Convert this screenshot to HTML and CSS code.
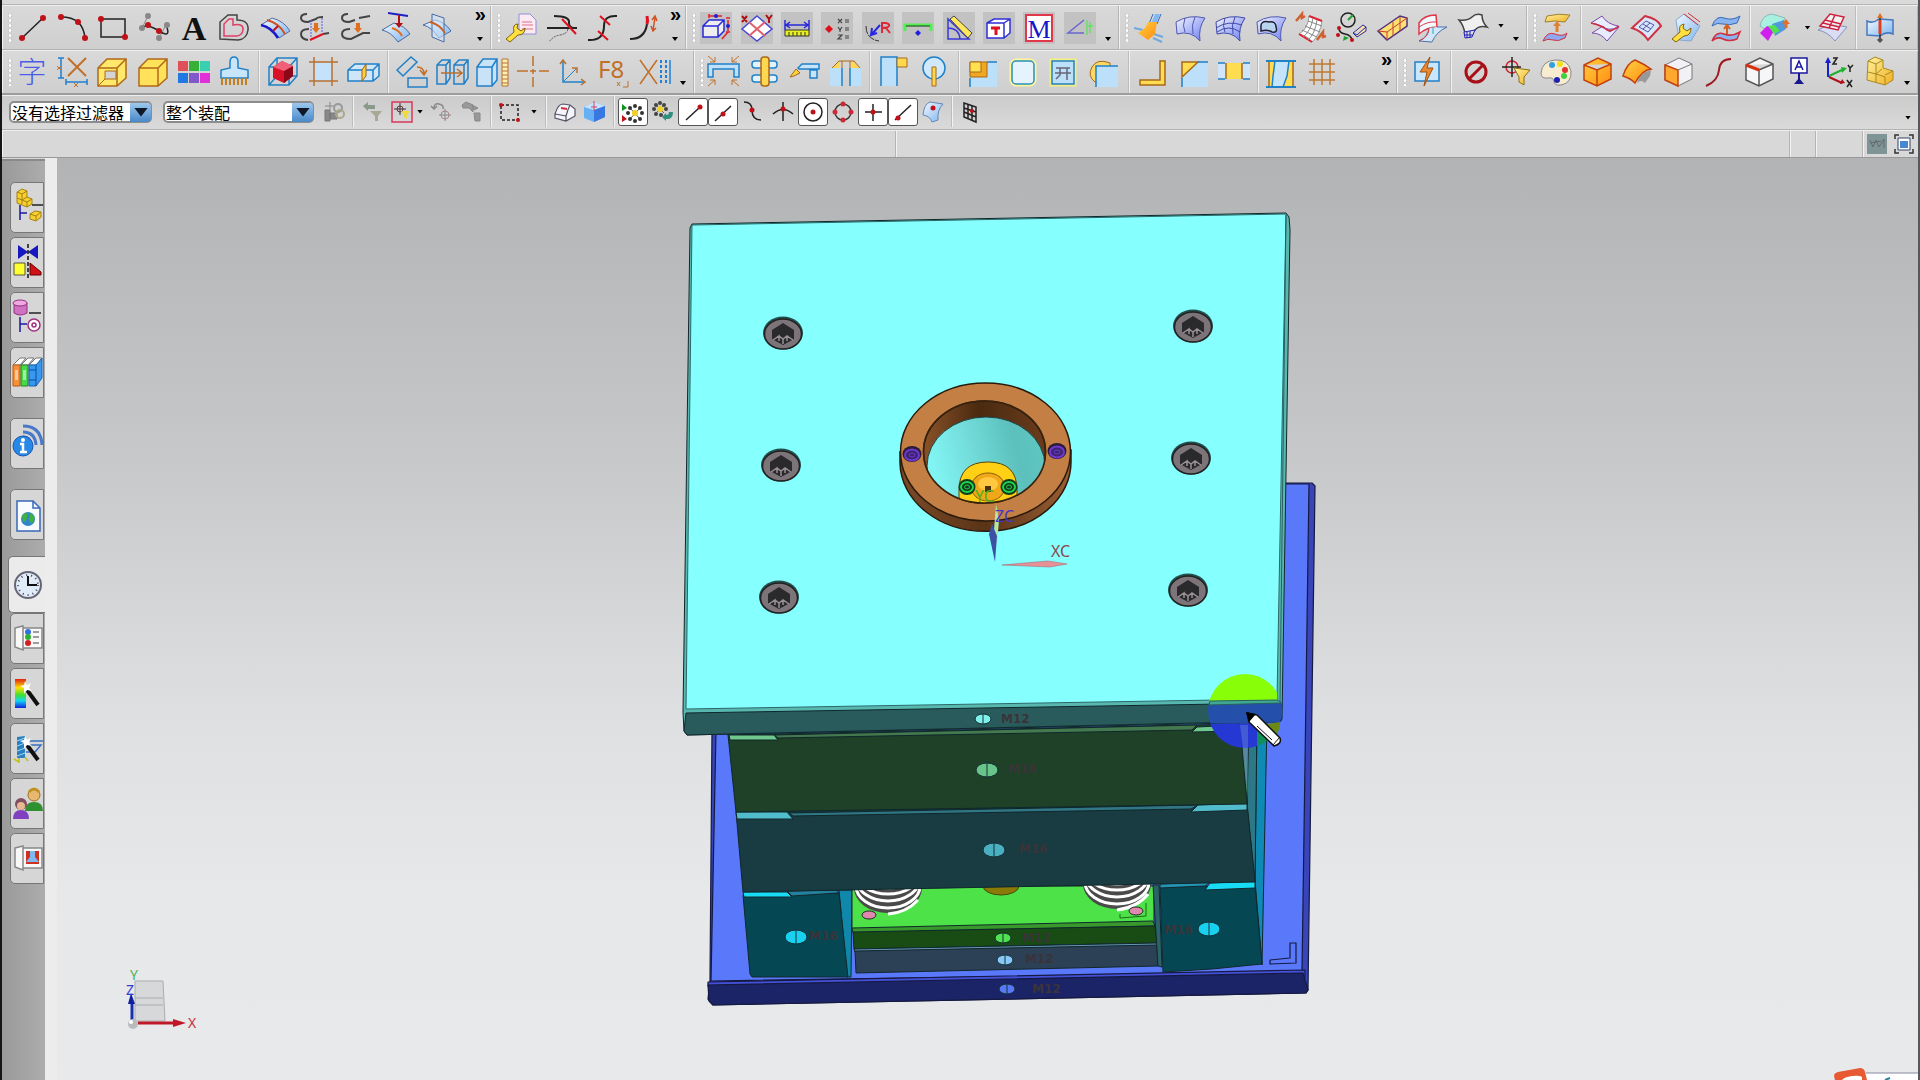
FILE: index.html
```html
<!DOCTYPE html>
<html lang="zh-CN">
<head>
<meta charset="utf-8">
<title>模具装配</title>
<link rel="stylesheet" href="styles.css">
</head>
<body>
<svg class="defs" aria-hidden="true">
<defs>
<linearGradient id="gBlue" x1="0" y1="0" x2="1" y2="1"><stop offset="0" stop-color="#f4f6ff"/><stop offset="1" stop-color="#6a7cf0"/></linearGradient>
<linearGradient id="gSky" x1="0" y1="0" x2="1" y2="1"><stop offset="0" stop-color="#f2f9ff"/><stop offset="1" stop-color="#7fb4ee"/></linearGradient>
<linearGradient id="gGold" x1="0" y1="0" x2="1" y2="1"><stop offset="0" stop-color="#fff3a0"/><stop offset="1" stop-color="#f0b020"/></linearGradient>
<linearGradient id="gOrange" x1="0" y1="0" x2="1" y2="1"><stop offset="0" stop-color="#ffd040"/><stop offset="1" stop-color="#ff8c10"/></linearGradient>
<linearGradient id="gRain" x1="0" y1="0" x2="0" y2="1"><stop offset="0" stop-color="#e02010"/><stop offset=".3" stop-color="#ffe000"/><stop offset=".55" stop-color="#40e030"/><stop offset=".75" stop-color="#10d8f0"/><stop offset="1" stop-color="#1020e0"/></linearGradient>
</defs>
</svg>
<div class="app">
<header class="toolbars">
<div class="strip"></div>

<div class="bar row-one">
<section class="group" aria-label="曲线"><span class="grip"></span>
<button class="tool" type="button" aria-label="直线"><svg viewBox="0 0 32 32"><path d="M6 26L27 6" stroke="#222" stroke-width="1.5"/><g fill="#c01018"><circle cx="6" cy="26" r="3"/><circle cx="27" cy="6" r="3"/></g></svg></button>
<button class="tool" type="button" aria-label="圆弧"><svg viewBox="0 0 32 32"><path d="M4 5Q26 5 28 26" stroke="#222" stroke-width="1.5"/><g fill="#c01018"><circle cx="4" cy="5" r="3"/><circle cx="21" cy="10" r="3"/><circle cx="28" cy="26" r="3"/></g></svg></button>
<button class="tool" type="button" aria-label="矩形"><svg viewBox="0 0 32 32"><path d="M4 7H28V25H4z" stroke="#222" stroke-width="1.5"/><g fill="#c01018"><circle cx="4" cy="7" r="3"/><circle cx="28" cy="25" r="3"/></g></svg></button>
<button class="tool" type="button" aria-label="艺术样条"><svg viewBox="0 0 32 32"><path d="M4 16L10 4 M21 26L28 13" stroke="#888"/><path d="M4 16Q8 11 21 19T28 13" stroke="#222" stroke-width="1.5"/><g fill="#888"><circle cx="10" cy="4" r="3"/><circle cx="4" cy="16" r="3"/><circle cx="29" cy="13" r="3"/><circle cx="21" cy="26" r="3"/></g><g fill="#c01018"><circle cx="10" cy="13" r="3"/><circle cx="21" cy="19" r="3"/></g></svg></button>
<button class="tool" type="button" aria-label="文本"><svg viewBox="0 0 32 32"><text class="serif-a" x="16" y="28">A</text></svg></button>
<button class="tool" type="button" aria-label="偏置曲线"><svg viewBox="0 0 32 32"><path d="M2 27V10L10 3H19V8Q31 8 30 18Q29 27 20 28Z" stroke="#444" stroke-width="1.5"/><path d="M6 24V12L11 7H15V13Q26 11 25 18Q24 24 18 24Z" stroke="#e04068" stroke-width="1.5"/></svg></button>
<button class="tool" type="button" aria-label="面上偏置"><svg viewBox="0 0 32 32"><path d="M2 13L13 6Q25 9 31 19L20 26Q14 15 2 13Z" fill="url(#gSky)" stroke="#5a6a98"/><path d="M2 13Q12 15 19 26" stroke="#1818d0" stroke-width="2.5"/><path d="M8 8Q20 11 26 22" stroke="#d05020" stroke-width="2"/><path d="M14 19L19 14" stroke="#c01018" stroke-width="2"/></svg></button>
<button class="tool" type="button" aria-label="桥接曲线"><svg viewBox="0 0 32 32"><path d="M8 2Q2 2 2 6T9 10L17 7Q18 5 24 5 M10 17Q2 17 2 22T9 28 M24 22L30 21" stroke="#444" stroke-width="2"/><path d="M12 8V26 M23 6V20" stroke="#5858f0" stroke-dasharray="2 1"/><path d="M11 28L24 22" stroke="#e01020" stroke-width="2"/><path d="M15 11H19V16H21L17 21L13 16H15Z" fill="#e07020"/></svg></button>
<button class="tool" type="button" aria-label="连结曲线"><svg viewBox="0 0 32 32"><path d="M8 2Q2 2 2 6T9 10L15 8 M19 6L30 4 M10 17Q2 17 2 22T11 27L23 21L30 21" stroke="#444" stroke-width="2"/><path d="M16 11H20V16H22L18 21L14 16H16Z" fill="#e07020"/></svg></button>
<button class="tool" type="button" aria-label="投影曲线"><svg viewBox="0 0 32 32"><path d="M2 18L14 11Q25 14 30 22L18 30Q11 20 2 18Z" fill="url(#gSky)" stroke="#4a6aa0"/><path d="M8 1L28 4" stroke="#2020c8" stroke-width="2"/><path d="M19 3V14" stroke="#b01018" stroke-width="2"/><path d="M15 11H23L19 16Z" fill="#b01018"/><path d="M12 16Q19 18 22 24" stroke="#e07020" stroke-width="2"/></svg></button>
<button class="tool" type="button" aria-label="相交曲线"><svg viewBox="0 0 32 32"><path d="M2 13L14 8Q24 10 30 19L18 26Q11 15 2 13Z" fill="url(#gSky)" stroke="#4a6aa0"/><path d="M11 2L23 6V30L11 25Z" fill="#cfe4fa" fill-opacity=".6" stroke="#4a6aa0"/><path d="M9 10Q18 12 24 21" stroke="#d06020" stroke-width="2"/></svg></button>
<div class="tail wide"><span class="chev">»</span><span class="drop"></span></div></section>

<section class="group" aria-label="编辑曲线"><span class="grip"></span>
<button class="tool" type="button" aria-label="编辑参数"><svg viewBox="0 0 32 32"><path d="M14 2H25L31 8V22H14Z" fill="#fbeaf4" stroke="#9090d8"/><path d="M17 10H27 M17 13H28 M17 17H28" stroke="#e07080"/><path d="M1 27L9 20Q7 12 13 12L12 16L16 19L20 16Q20 23 13 23L5 30Z" fill="#ffe040" stroke="#806010"/></svg></button>
<button class="tool" type="button" aria-label="修剪曲线"><svg viewBox="0 0 32 32"><path d="M8 4Q24 4 23 11Q23 15 27 16" stroke="#222" stroke-width="2"/><path d="M1 16H31" stroke="#222" stroke-width="2"/><path d="M22 17Q21 22 14 23T3 30" stroke="#555" stroke-dasharray="2 1"/><path d="M16 7L30 22" stroke="#e01020" stroke-width="2"/></svg></button>
<button class="tool" type="button" aria-label="分割曲线"><svg viewBox="0 0 32 32"><path d="M31 4Q18 3 18 14Q18 29 2 28" stroke="#222" stroke-width="2"/><path d="M14 4L24 13 M12 19L22 28" stroke="#e01020" stroke-width="2"/></svg></button>
<button class="tool" type="button" aria-label="曲线长度"><svg viewBox="0 0 32 32"><path d="M3 27Q18 27 20 12" stroke="#222" stroke-width="2"/><path d="M20 12Q21 9 20 4" stroke="#e01020" stroke-width="3"/><path d="M28 6L26 18 M25 8L28 4L30 9 M24 14L26 19L29 16" stroke="#d05020" stroke-width="1.5"/></svg></button>
<div class="tail"><span class="chev">»</span><span class="drop"></span></div></section>

<section class="group" aria-label="尺寸"><span class="grip"></span>
<button class="tool on" type="button" aria-label="简单距离"><svg viewBox="0 0 32 32"><path d="M3 14L9 8H24V19L18 25H3Z M3 14H18V25 M18 14L24 8" fill="#eee" stroke="#2828d8" stroke-width="1.5"/><path d="M9 4H22 M28 8V19 M22 27L28 20 M9 2V6 M26 6H30 M26 20H30" stroke="#e02030" stroke-width="1.5"/><circle cx="16" cy="4" r="2" fill="#2020d0"/><circle cx="28" cy="14" r="2" fill="#2020d0"/></svg></button>
<button class="tool on" type="button" aria-label="坐标平面"><svg viewBox="0 0 32 32"><path d="M16 4L31 17L16 29L1 17Z" fill="#fff" stroke="#4848d8" stroke-width="1.5"/><path d="M8 10L24 24 M24 10L8 24" stroke="#e06070" stroke-width="2"/><path d="M1 4L6 10 M6 4L1 10 M25 3L28 7L31 3 M28 7V11" stroke="#b01018" stroke-width="2"/></svg></button>
<button class="tool on" type="button" aria-label="测量距离"><svg viewBox="0 0 32 32"><path d="M4 8V18 M28 8V18 M5 13H27 M9 10L5 13L9 16 M23 10L27 13L23 16" stroke="#2828d8" stroke-width="1.5"/><path d="M4 18H28V24H4Z" fill="#e8f020" stroke="#333"/><path d="M8 20V24 M12 20V24 M16 20V24 M20 20V24 M24 20V24" stroke="#333"/></svg></button>
<button class="tool on" type="button" aria-label="点坐标"><svg viewBox="0 0 32 32"><path d="M8 13L12 17L8 21L4 17Z" fill="#e01018"/><path d="M17 7L21 11 M21 7L17 11 M17 15L19 18L21 15 M19 18V20 M17 23H21L17 27H21 M24 8H28 M24 10H28 M24 16H28 M24 18H28 M24 24H28 M24 26H28" stroke="#444" stroke-width="1.2"/></svg></button>
<button class="tool on" type="button" aria-label="半径"><svg viewBox="0 0 32 32"><path d="M4 14Q4 27 17 29" stroke="#333" stroke-dasharray="8 1"/><path d="M18 13L10 22 M10 16L9 23L15 21" stroke="#2828e0" stroke-width="2"/><path d="M20 21V11H24Q28 12 27 14T20 16 M24 16L28 21" stroke="#e02838" stroke-width="2"/></svg></button>
<button class="tool on" type="button" aria-label="水平"><svg viewBox="0 0 32 32"><path d="M3 19V13H29V19" stroke="#50f050" stroke-width="3"/><path d="M4 14H28" stroke="#333"/><path d="M16 18L19 21L16 24L13 21Z" fill="#2020e0"/></svg></button>
<button class="tool on" type="button" aria-label="角度"><svg viewBox="0 0 32 32"><path d="M5 7V27H26Z M5 16Q16 16 17 27" stroke="#3838d8" stroke-width="1.5"/><path d="M7 7L11 4L29 21L25 26Z" fill="#ffe860" stroke="#444"/></svg></button>
<button class="tool on" type="button" aria-label="注释体"><svg viewBox="0 0 32 32"><path d="M4 11L11 7H27V21L21 26H4Z M4 11H21V26 M21 11L27 7" fill="#fff" stroke="#3030d8" stroke-width="1.5"/><path d="M8 16H17 M13 16V23" stroke="#e01020" stroke-width="3"/></svg></button>
<button class="tool on" type="button" aria-label="测量"><svg viewBox="0 0 32 32"><path d="M3 3H29V29H3Z" fill="#fff" stroke="#e03848" stroke-width="2"/><text class="serif-m" x="16" y="26">M</text></svg></button>
<button class="tool on" type="button" aria-label="夹角"><svg viewBox="0 0 32 32"><path d="M20 8L4 21H20" stroke="#6868d0" stroke-width="1.5"/><path d="M23 8V23 M26 10V21 M23 14H29" stroke="#68e068" stroke-width="1.5"/></svg></button>
<div class="tail thin"><span class="drop low"></span></div></section>

<section class="group" aria-label="曲面"><span class="grip"></span>
<button class="tool" type="button" aria-label="面倒圆"><svg viewBox="0 0 32 32"><path d="M16 12L20 2 M24 12L28 2" stroke="#3868b8"/><path d="M18 12L22 2H27L23 13Z" fill="#80b8f4"/><path d="M1 16L10 18M21 22L30 25 M20 26L29 30" stroke="#70a8e0" stroke-width="2"/><path d="M5 21L12 16L15 10H24L22 22L15 28Z" fill="url(#gOrange)"/></svg></button>
<button class="tool" type="button" aria-label="直纹面"><svg viewBox="0 0 32 32"><path d="M2 10Q15 2 31 6Q24 16 26 29Q17 18 3 22Z" fill="url(#gBlue)" stroke="#5058b0"/><path d="M11 6Q8 14 11 20 M21 5Q17 13 19 22" stroke="#5058b0"/></svg></button>
<button class="tool" type="button" aria-label="网格曲面"><svg viewBox="0 0 32 32"><path d="M2 10Q15 2 31 6Q24 16 26 29Q17 18 3 22Z" fill="url(#gBlue)" stroke="#4048a8"/><path d="M11 6Q8 14 11 20 M21 5Q17 13 19 22 M2 16Q14 8 28 13 M3 20Q15 12 26 20" stroke="#4048a8"/></svg></button>
<button class="tool" type="button" aria-label="修补开口"><svg viewBox="0 0 32 32"><path d="M2 10Q15 2 31 6Q24 16 26 29Q17 18 3 22Z" fill="url(#gBlue)" stroke="#5058b0"/><path d="M6 16Q5 8 14 10Q21 9 21 15Q23 21 17 20Q13 17 6 19Z" fill="#b8d4ee" stroke="#223" stroke-width="1.5"/></svg></button>
<button class="tool" type="button" aria-label="扫掠"><svg viewBox="0 0 32 32"><path d="M4 22Q13 17 14 4L27 9Q25 23 17 30Q13 24 4 22Z" fill="#fff" stroke="#999"/><path d="M14 4L27 9 M4 22L17 30" stroke="#e02030" stroke-width="2"/><path d="M18 6Q16 19 8 25 M22 8Q20 22 13 28 M10 14L25 20 M7 18L22 25 M13 9L27 14" stroke="#888"/><path d="M1 9L7 2V6L10 4M22 28L28 20V25L31 24" stroke="#d06030" stroke-width="2.5"/></svg></button>
<button class="tool" type="button" aria-label="截面"><svg viewBox="0 0 32 32"><circle cx="13" cy="8" r="7" stroke="#222" stroke-width="1.5"/><path d="M13 8L18 3" stroke="#20a030" stroke-width="2"/><path d="M4 16Q4 21 10 22T17 28" stroke="#222" stroke-width="1.5"/><g fill="#c01018"><circle cx="4" cy="16" r="2"/><circle cx="3" cy="23" r="2"/><circle cx="17" cy="28" r="2"/></g><path d="M8 29L14 26L9 24Z" fill="#20a030"/><path d="M18 21L28 13L31 15V19L22 25Z M18 21L22 23L31 15" fill="#ffe0a0" stroke="#2828a0"/></svg></button>
<button class="tool" type="button" aria-label="变化扫掠"><svg viewBox="0 0 32 32"><path d="M2 19L24 4L31 6V14L11 28Z" fill="#ffe070" stroke="#503080" stroke-width="1.5"/><path d="M2 19L11 20L31 6 M11 20V28 M17 10V24 M24 5V19" stroke="#c04030"/></svg></button>
<button class="tool" type="button" aria-label="过渡曲面"><svg viewBox="0 0 32 32"><path d="M3 11Q8 3 20 3L21 15Q11 15 3 22Z" fill="#f2fbff" stroke="#e03848" stroke-width="1.5"/><path d="M21 15H31Q20 20 16 30L3 29Q12 25 13 16" fill="#d2e8fa" stroke="#5070a8"/><path d="M3 29Q13 25 13 16 M3 15Q12 9 20 10" stroke="#e03848"/><path d="M17 15V22" stroke="#20b0b0"/></svg></button>
<button class="tool" type="button" aria-label="曲面编辑"><svg viewBox="0 0 32 32"><path d="M2 8Q11 9 15 5T25 3Q25 10 30 15Q22 13 18 18Q14 23 8 22Q7 14 2 8Z" fill="#f0f0f0" stroke="#444" stroke-width="1.5"/><path d="M7 20L18 18L15 25L8 26Z" fill="#dde" stroke="#2020b0"/><path d="M7 23H16 M10 20V26 M13 19V26" stroke="#2020b0"/></svg></button>
<div class="tail wide pair"><span class="drop high"></span><span class="drop low"></span></div></section>

<section class="group" aria-label="自由曲面"><span class="grip"></span>
<button class="tool" type="button" aria-label="拉伸面"><svg viewBox="0 0 32 32"><path d="M6 4Q18 1 29 3L24 10Q13 8 4 10Z" fill="url(#gGold)" stroke="#a08030"/><path d="M16 12V20" stroke="#e08030" stroke-width="3"/><path d="M12 14L16 9L20 14Z" fill="#e08030"/><path d="M2 29Q6 19 14 22T26 21L24 26Q17 30 12 28T2 29Z" fill="#90a8f0" stroke="#d03040"/></svg></button>
<i class="sep"></i>
<button class="tool" type="button" aria-label="匹配边"><svg viewBox="0 0 32 32"><path d="M2 11L13 4Q18 12 29 14L21 20Q12 12 2 11Z M3 21L14 14Q18 20 30 15L18 29Q12 21 3 21Z" fill="#e8ecff" stroke="#8048b0"/><path d="M2 11Q14 14 18 18Q23 20 30 14" stroke="#d03040" stroke-width="1.5"/></svg></button>
<button class="tool" type="button" aria-label="边对称"><svg viewBox="0 0 32 32"><path d="M2 16L15 4Q28 7 31 14L18 28Q12 19 2 16Z" fill="#d8e6fb" stroke="#d03040" stroke-width="2"/><path d="M9 15L16 9L24 13L18 20Z M13 12L21 17 M20 11L13 17" stroke="#5058a8"/></svg></button>
<button class="tool" type="button" aria-label="修复面"><svg viewBox="0 0 32 32"><path d="M6 8L14 2L30 14L21 29L9 28Z" fill="url(#gSky)" stroke="#86a8d0"/><path d="M14 2L28 13 M18 1L30 10" stroke="#d03040"/><path d="M2 27L10 20Q8 13 14 12L13 16L17 19L21 16Q21 24 14 24L6 30Z" fill="#ffe040" stroke="#806010"/></svg></button>
<button class="tool" type="button" aria-label="变形曲面"><svg viewBox="0 0 32 32"><path d="M2 14Q6 3 14 6T30 4L27 11Q19 14 13 12T2 14Z" fill="#88b4f0" stroke="#3868b8"/><path d="M2 29Q6 19 14 22T30 20L27 27Q19 30 13 27T2 29Z" fill="#88b4f0" stroke="#d03040" stroke-width="1.5"/><path d="M17 22V15 M14 17L17 13L20 17" stroke="#d06020" stroke-width="2"/></svg></button>
<i class="sep"></i>
<button class="tool" type="button" aria-label="面分析"><svg viewBox="0 0 32 32"><path d="M2 14Q4 3 14 2L27 6Q24 14 14 15L9 18Z" fill="#a8f0e0" stroke="#90b8b8"/><path d="M14 12L26 8L28 17L17 24Z" fill="#5098e0"/><path d="M2 21L9 14L17 17L10 29Z" fill="#d020f0"/><path d="M10 14L17 13L22 19L16 22Z" fill="#50e050"/><path d="M28 16V11" stroke="#e07030" stroke-width="3"/><path d="M24 12L28 7L32 12Z" fill="#e07030"/></svg></button>
<span class="drop inline"></span>
<button class="tool" type="button" aria-label="网格面"><svg viewBox="0 0 32 32"><path d="M2 18L14 12L31 15L19 29Q12 20 2 18Z" fill="#d8dcf4" stroke="#8890b8"/><path d="M4 14L14 2L28 5L22 18Z M9 8L25 12 M7 11L23 15 M19 3L13 16" fill="#fff" fill-opacity=".7" stroke="#d02040" stroke-width="1.5"/></svg></button>
<i class="sep"></i>
<button class="tool" type="button" aria-label="对称"><svg viewBox="0 0 32 32"><path d="M3 9Q9 12 15 7L29 8V22Q22 19 16 24L3 23Z" fill="url(#gSky)" stroke="#4878c0" stroke-width="1.5"/><path d="M16 4V28" stroke="#333" stroke-width="1.5"/><path d="M16 8V22" stroke="#e04020" stroke-width="3"/><path d="M13 6L16 1L19 6Z" fill="#e07020"/><path d="M13 28L16 31L19 28L16 25Z" fill="#555"/></svg></button>
<div class="tail slim"><span class="drop low"></span></div></section>
</div>

<div class="bar row-two">
<section class="group" aria-label="标注工具"><span class="grip"></span>
<button class="tool" type="button" aria-label="文字"><svg viewBox="0 0 32 32"><text class="zi" x="16" y="27">字</text></svg></button>
<button class="tool" type="button" aria-label="尺寸标注"><svg viewBox="0 0 32 32"><path d="M4 2V22 M1 2H7 M1 22H7 M9 26H30 M9 23V29 M30 23V29" stroke="#2080d0" stroke-width="1.5"/><path d="M11 2L29 20 M29 2L11 20" stroke="#c07028" stroke-width="2"/><path d="M0 10L4 14M4 10L0 14 M17 27L21 31M21 27L17 31" stroke="#c07028"/></svg></button>
<button class="tool" type="button" aria-label="方框"><svg viewBox="0 0 32 32"><path d="M1 12L10 3H29V22L20 30H1Z" fill="#ffe86a" stroke="#b06818" stroke-width="1.5"/><path d="M1 12H20V30 M20 12L29 3" stroke="#b06818" stroke-width="1.5"/><path d="M8 15H19V23H8Z" fill="#d4d4d4" stroke="#b06818"/><path d="M1 30L8 23" stroke="#b06818"/></svg></button>
<button class="tool" type="button" aria-label="块"><svg viewBox="0 0 32 32"><path d="M1 12L10 3H29V22L20 30H1Z M1 12H20V30 M20 12L29 3" fill="#ffe25a" stroke="#b06818" stroke-width="1.5"/></svg></button>
<button class="tool" type="button" aria-label="颜色"><svg viewBox="0 0 32 32"><path d="M0 5H10V15H0Z" fill="#e05058"/><path d="M11 5H21V15H11Z" fill="#38b038"/><path d="M22 5H32V15H22Z" fill="#38d0b0"/><path d="M0 17H10V27H0Z" fill="#2078e0"/><path d="M11 17H21V27H11Z" fill="#8058c8"/><path d="M22 17H32V27H22Z" fill="#e030d8"/></svg></button>
<button class="tool" type="button" aria-label="清理"><svg viewBox="0 0 32 32"><path d="M12 12V6Q12 1 16 1T20 6V12L30 14V22H3V14Z" fill="#c8e6fb" stroke="#2080c8" stroke-width="1.5"/><path d="M4 22V29 M8 22V29 M12 22V29 M16 22V29 M20 22V29 M24 22V29 M28 22V29" stroke="#c08020" stroke-width="2"/></svg></button>
<i class="sep"></i>
<button class="tool" type="button" aria-label="包容体"><svg viewBox="0 0 32 32"><path d="M2 11L10 2H30V20L22 29H2Z M2 11H22V29 M22 11L30 2 M10 2V20H30 M2 29L10 20" stroke="#2080c8" stroke-width="1.5"/><path d="M6 11L15 5L26 10V20L17 27L6 22Z" fill="#d81028"/><path d="M17 15L26 10V20L17 27Z" fill="#8a0818"/><path d="M6 11L15 5L26 10L17 15Z" fill="#f06078"/></svg></button>
<button class="tool" type="button" aria-label="边框"><svg viewBox="0 0 32 32"><path d="M7 7H25V25H7Z" fill="#c4e2fa"/><path d="M7 1V30 M25 1V30 M2 6H31 M2 25H31" stroke="#b87030" stroke-width="1.5"/></svg></button>
<button class="tool" type="button" aria-label="剖切块"><svg viewBox="0 0 32 32"><path d="M0 14L7 8H31V20L25 25H0Z M0 14H25V25 M25 14L31 8" fill="#cfe6fa" stroke="#2080c8" stroke-width="1.5"/><path d="M14 14L18 8V20L14 25Z" fill="#ffd040" stroke="#a06010"/></svg></button>
<i class="sep"></i>
<button class="tool" type="button" aria-label="旋转"><svg viewBox="0 0 32 32"><path d="M1 14L15 1L21 6L7 20Z M12 22H31V31H12Z" stroke="#2080c8" stroke-width="1.5"/><path d="M21 11Q28 11 28 18 M24 14L28 19L31 14" stroke="#c07028" stroke-width="1.5"/></svg></button>
<button class="tool" type="button" aria-label="平移"><svg viewBox="0 0 32 32"><path d="M0 9L5 4H13V22L9 28H0Z M0 9H9V28 M9 9L13 4 M17 9L22 4H31V22L27 28H17Z M17 9H27V28 M27 9L31 4" stroke="#2080c8" stroke-width="1.5"/><path d="M4 17H24 M20 13L25 17L20 21" stroke="#b87030" stroke-width="1.5"/></svg></button>
<button class="tool" type="button" aria-label="测高"><svg viewBox="0 0 32 32"><path d="M0 11L6 3H20V24L15 30H0Z M0 11H15V30 M15 11L20 3" fill="#c8e2f8" stroke="#2080c8" stroke-width="1.5"/><path d="M25 3H31V30H25Z M25 7H31 M25 11H31 M25 15H31 M25 19H31 M25 23H31 M25 27H31" fill="#fff0b0" stroke="#b87030"/></svg></button>
<button class="tool" type="button" aria-label="中心线"><svg viewBox="0 0 32 32"><path d="M16 0V10 M16 13V18 M16 21V31 M0 15H11 M13 15H19 M22 15H32" stroke="#c07028" stroke-width="1.5"/></svg></button>
<button class="tool" type="button" aria-label="坐标系"><svg viewBox="0 0 32 32"><path d="M5 5V26H26" stroke="#2080c8" stroke-width="1.5"/><path d="M6 25L19 12" stroke="#2080c8"/><path d="M2 8L5 4L8 8 M23 23L27 26L23 29 M14 12H19V17" stroke="#b87030" stroke-width="1.5"/></svg></button>
<button class="tool" type="button" aria-label="F8"><svg viewBox="0 0 32 32"><text class="fkey" x="0" y="22">F8</text><path d="M19 26L22 30M22 26L19 30 M30 25V31H25" stroke="#c07028"/></svg></button>
<button class="tool" type="button" aria-label="删除线"><svg viewBox="0 0 32 32"><path d="M1 4L18 28 M18 4L1 28" stroke="#c07028" stroke-width="1.5"/><path d="M22 4V28 M27 4V28" stroke="#2080d8" stroke-width="2" stroke-dasharray="3 2"/><path d="M31 4V28" stroke="#2080d8" stroke-width="1.5"/></svg></button>
<div class="tail thin"><span class="drop low"></span></div></section>

<section class="group" aria-label="模具工具"><span class="grip"></span>
<button class="tool" type="button" aria-label="夹紧"><svg viewBox="0 0 32 32"><path d="M0 8H31V21H26V13H5V21H0Z" fill="#c0e0fa" stroke="#2080c8" stroke-width="1.5"/><path d="M0 0L7 6M2 6H7V1 M31 0L24 6M24 1V6H29 M0 30L7 24M2 24H7V29 M31 30L24 24M24 29V24H29" stroke="#c07028"/></svg></button>
<button class="tool" type="button" aria-label="销"><svg viewBox="0 0 32 32"><rect x="3" y="5" width="25" height="7" rx="3" fill="#e4f2fd" stroke="#2080c8" stroke-width="1.5"/><rect x="3" y="19" width="25" height="7" rx="3" fill="#e4f2fd" stroke="#2080c8" stroke-width="1.5"/><rect x="12" y="1" width="8" height="29" rx="3" fill="#ffd850" stroke="#a86818" stroke-width="1.5"/></svg></button>
<button class="tool" type="button" aria-label="喷嘴"><svg viewBox="0 0 32 32"><path d="M9 12L13 8H30V13H10Z M21 14H28V22H21Z" fill="#c8e4fa" stroke="#2080c8" stroke-width="1.5"/><path d="M1 21L7 13L11 17L5 20Z" fill="#ffd040" stroke="#a86818"/></svg></button>
<button class="tool" type="button" aria-label="浇口"><svg viewBox="0 0 32 32"><path d="M0 12H12V30H0Z M20 12H31V30H20Z" fill="#bcdffa"/><path d="M2 12L10 5V12Z M22 5L30 12H22Z" fill="#ffd850"/><path d="M2 12L9 5H24L30 12 M12 5V12 M20 5V12" stroke="#a86818"/><path d="M12 12V30 M20 12V30" stroke="#2080c8" stroke-width="1.5"/></svg></button>
<i class="sep"></i>
<button class="tool" type="button" aria-label="滑块"><svg viewBox="0 0 32 32"><path d="M3 30V1H19V13H19V30" fill="#bcdffa" stroke="#2080c8" stroke-width="1.5"/><path d="M19 2H29V11H19Z" fill="#ffd850" stroke="#a86818"/></svg></button>
<button class="tool" type="button" aria-label="顶针"><svg viewBox="0 0 32 32"><circle cx="15" cy="12" r="11" fill="#d0e8fc" stroke="#2080c8" stroke-width="1.5"/><path d="M13 11H17V30H13Z" fill="#ffd850" stroke="#a86818"/></svg></button>
<i class="sep"></i>
<button class="tool" type="button" aria-label="镶件"><svg viewBox="0 0 32 32"><path d="M3 31V6H30V31Z" fill="#bcdffa"/><path d="M3 6H20V21H3Z" fill="#f0a820" stroke="#a86818"/><path d="M3 6H14V16H3Z" fill="#ffe050" stroke="#a86818"/><path d="M3 22V31 M20 6H30" stroke="#2080c8" stroke-width="1.5"/></svg></button>
<button class="tool" type="button" aria-label="圆角框"><svg viewBox="0 0 32 32"><rect x="3" y="4" width="24" height="25" rx="5" stroke="#fff59a" stroke-width="3"/><rect x="4" y="5" width="22" height="23" rx="4" fill="#e4f3fe" stroke="#2890b8" stroke-width="1.5"/></svg></button>
<button class="tool" type="button" aria-label="开腔"><svg viewBox="0 0 32 32"><path d="M3 4H27V29H3Z" fill="#bcdffa" stroke="#f4f080" stroke-width="3"/><path d="M4 5H26V28H4Z" stroke="#2080c8" stroke-width="1.5"/><path d="M8 12H22 M7 17H23 M12 12V19L8 23 M19 12V24" stroke="#667" stroke-width="1.5"/></svg></button>
<button class="tool" type="button" aria-label="清角"><svg viewBox="0 0 32 32"><path d="M7 26Q-1 20 4 11T22 7L22 11H9V25Z" fill="#ffd860" stroke="#a86818"/><path d="M8 31V10H30V31Z" fill="#bcdffa"/><path d="M8 31V10H30" stroke="#2080c8" stroke-width="1.5"/></svg></button>
<i class="sep"></i>
<button class="tool" type="button" aria-label="直角"><svg viewBox="0 0 32 32"><path d="M3 24H23V5H28V29H3Z" fill="#ffdc50" stroke="#a86818" stroke-width="1.5"/></svg></button>
<button class="tool" type="button" aria-label="倒角"><svg viewBox="0 0 32 32"><path d="M5 31V6H31V31Z" fill="#bcdffa"/><path d="M5 6H21L5 21Z" fill="#ffdc50" stroke="#a86818" stroke-width="1.5"/><path d="M5 22V31 M21 6H31" stroke="#2080c8" stroke-width="1.5"/></svg></button>
<button class="tool" type="button" aria-label="槽"><svg viewBox="0 0 32 32"><path d="M0 7H9V23H0Z M24 7H32V23H24Z" fill="#cfe6fa"/><path d="M8 7H24V23H8Z" fill="#ffdc50"/><path d="M0 7H7M25 7H32M0 23H7M25 23H32" stroke="#2080c8" stroke-width="1.5"/><path d="M8 7V23M24 7V23" stroke="#a86818" stroke-width="1.5"/></svg></button>
<i class="sep"></i>
<button class="tool" type="button" aria-label="分割"><svg viewBox="0 0 32 32"><path d="M3 5H27V31H3Z" fill="#ffdc50"/><path d="M9 5H23L21 20L17 31H6L7 20Z" fill="#c4e4fb" stroke="#2080c8" stroke-width="1.5"/><path d="M3 5V31 M27 5V31" stroke="#a86818" stroke-width="1.5"/><path d="M0 5H30 M0 31H30" stroke="#2080c8" stroke-width="2"/></svg></button>
<button class="tool" type="button" aria-label="栅格"><svg viewBox="0 0 32 32"><path d="M7 3V29 M15 3V29 M23 3V29 M2 8H28 M2 16H28 M2 24H28" stroke="#c07830" stroke-width="1.5"/></svg></button>
<div class="tail broad"><span class="chev">»</span><span class="drop"></span></div></section>

<section class="group" aria-label="选择"><span class="grip"></span>
<button class="tool" type="button" aria-label="快速"><svg viewBox="0 0 32 32"><path d="M4 6H28V25H4Z" fill="#c8e6fc" stroke="#2080c8" stroke-width="1.5"/><path d="M19 1L9 16H16L13 30L22 12H16Z" fill="#e88830" stroke="#a05010"/></svg></button>
<i class="sep"></i>
<button class="tool" type="button" aria-label="禁止"><svg viewBox="0 0 32 32"><circle cx="16" cy="16" r="10" stroke="#a81018" stroke-width="3"/><path d="M9 23L23 9" stroke="#a81018" stroke-width="3"/></svg></button>
<button class="tool" type="button" aria-label="过滤"><svg viewBox="0 0 32 32"><circle cx="12" cy="11" r="6" stroke="#d02030" stroke-width="1.5"/><path d="M2 11H21 M12 1V21" stroke="#222" stroke-width="1.5"/><path d="M14 12L30 14L24 21V29L19 26V21Z" fill="url(#gGold)" stroke="#907010"/></svg></button>
<button class="tool" type="button" aria-label="调色板"><svg viewBox="0 0 32 32"><path d="M1 17Q2 5 15 4Q28 3 31 15Q32 27 21 29Q14 30 14 25Q13 21 8 22Q1 23 1 17Z" fill="#f8ecd0" stroke="#888"/><circle cx="12" cy="9" r="3" fill="#30a0e0"/><circle cx="20" cy="8" r="3" fill="#f0e020"/><circle cx="25" cy="14" r="3" fill="#e03030"/><circle cx="24" cy="20" r="3" fill="#40d040"/><circle cx="17" cy="24" r="3" fill="#2020b0"/></svg></button>
<button class="tool" type="button" aria-label="实体"><svg viewBox="0 0 32 32"><path d="M3 9L17 2L30 8V23L16 30L3 24Z M3 9L16 14L30 8 M16 14V30" fill="url(#gOrange)" stroke="#c04010" stroke-width="1.5"/></svg></button>
<button class="tool" type="button" aria-label="片体"><svg viewBox="0 0 32 32"><path d="M16 27Q18 17 30 14L29 20L24 27Q20 23 16 27Z" fill="#999"/><path d="M2 20Q6 7 14 4Q23 8 30 13Q21 14 14 27Q9 22 2 20Z" fill="url(#gOrange)" stroke="#c04010" stroke-width="1.5"/></svg></button>
<button class="tool" type="button" aria-label="面"><svg viewBox="0 0 32 32"><path d="M3 9L17 2L30 8V23L16 30L3 24Z" fill="#f2f2f6" stroke="#777"/><path d="M3 9L16 14V30L3 24Z" fill="#ffa830" stroke="#c04010" stroke-width="1.5"/><path d="M16 14L30 8" stroke="#777"/></svg></button>
<button class="tool" type="button" aria-label="曲线"><svg viewBox="0 0 32 32"><path d="M29 3Q18 3 17 14T4 30" stroke="#a01820" stroke-width="2"/></svg></button>
<button class="tool" type="button" aria-label="边"><svg viewBox="0 0 32 32"><path d="M3 9L17 2L30 8V23L16 30L3 24Z M3 9L16 14L30 8 M16 14V30" fill="#f6f6f8" stroke="#555" stroke-width="1.5"/><path d="M3 9L16 14" stroke="#d83010" stroke-width="3"/></svg></button>
<button class="tool" type="button" aria-label="注释"><svg viewBox="0 0 32 32"><path d="M8 2H24V17H8Z" fill="#fff" stroke="#1818a0" stroke-width="1.5"/><path d="M12 14L16 5L20 14 M13 11H19" stroke="#1818a0" stroke-width="1.5"/><path d="M16 17V24" stroke="#181890" stroke-width="2"/><path d="M11 28L16 22L21 28Z" fill="#181890"/></svg></button>
<button class="tool" type="button" aria-label="基准坐标系"><svg viewBox="0 0 32 32"><path d="M5 21V3" stroke="#1820d0" stroke-width="2"/><path d="M2 7L5 1L8 7Z" fill="#1820d0"/><path d="M6 20L21 13" stroke="#20b030" stroke-width="2"/><path d="M18 11L24 12L19 17Z" fill="#20b030"/><path d="M6 21L19 27" stroke="#b01018" stroke-width="2"/><path d="M17 28L22 27L19 23Z" fill="#b01018"/><path d="M10 2H14L10 8H14 M25 9L27 12L30 9 M27 12V16 M24 24L29 31 M29 24L24 31" stroke="#222" stroke-width="1.5"/></svg></button>
<button class="tool" type="button" aria-label="组件"><svg viewBox="0 0 32 32"><path d="M4 5L11 1L19 4V12L29 15V24L21 29L3 24Z" fill="url(#gGold)" stroke="#a88820"/><path d="M4 5L12 8V27 M12 8L19 4 M4 16L12 18L21 21V29 M21 19L29 15 M12 18L18 13" stroke="#a88820"/></svg></button>
<div class="tail slim"><span class="drop low"></span></div></section>
</div>

<div class="bar selection">
<label class="pick pick-filter"><select aria-label="类型过滤器"><option>没有选择过滤器</option></select><span class="arrow"></span></label>
<label class="pick pick-scope"><select aria-label="选择范围"><option>整个装配</option></select><span class="arrow"></span></label>
<div class="snap">
<button class="mini" type="button" aria-label="选择组件"><svg viewBox="0 0 24 24"><path d="M3 10H8V21H3Z M8 13H15V19H8Z" fill="#888" stroke="#777"/><path d="M8 2V10 M3 6H12" stroke="#888"/><circle cx="16" cy="8" r="4" stroke="#999" stroke-width="2"/><circle cx="18" cy="14" r="4" stroke="#aaa88a" stroke-width="2"/></svg></button>
<i class="sep"></i>
<button class="mini" type="button" aria-label="重置过滤器"><svg viewBox="0 0 24 24"><path d="M3 6L8 2V5H15V9H8V11Z" fill="#8a9a8a"/><path d="M10 11H22L18 16V21H15V16Z" fill="#a8a894"/></svg></button>
<button class="mini" type="button" aria-label="允许选择"><svg viewBox="0 0 24 24"><path d="M2 2H22V22H2Z" stroke="#d83858" stroke-width="1.5"/><circle cx="10" cy="9" r="3" stroke="#703040"/><path d="M10 3V15 M4 9H16" stroke="#333"/><path d="M11 11H20L17 15V19L14 17V15Z" fill="#f0d840"/></svg></button>
<span class="drop drop-close"></span>
<button class="mini" type="button" aria-label="返回"><svg viewBox="0 0 24 24"><path d="M4 8Q4 3 9 4T13 9 M1 6L4 9L7 6" stroke="#888" stroke-width="1.5"/><circle cx="15" cy="15" r="4" stroke="#a88"/><path d="M15 9V21 M9 15H21" stroke="#888"/></svg></button>
<button class="mini" type="button" aria-label="定向"><svg viewBox="0 0 24 24"><path d="M2 5L6 2L13 5V12L9 8H3Z M12 5L18 8L14 10Z M14 13H20V21H15Z" fill="#999" stroke="#888"/></svg></button>
<i class="sep"></i>
<button class="mini" type="button" aria-label="矩形选择"><svg viewBox="0 0 24 24"><path d="M3 5H20V20H3Z" stroke="#222" stroke-width="1.5" stroke-dasharray="3 2"/><circle cx="3" cy="5" r="2" fill="#c01018"/><circle cx="20" cy="20" r="2" fill="#c01018"/></svg></button>
<span class="drop drop-apart"></span>
<i class="sep"></i>
<button class="mini" type="button" aria-label="线框"><svg viewBox="0 0 24 24"><path d="M2 14Q5 4 10 4L17 5L22 9V16L13 21L2 18Z M2 14L13 16V21 M13 16Q15 9 17 5" fill="#f4f4fa" stroke="#556" stroke-width="1.2"/><path d="M8 8L14 9" stroke="#d03040" stroke-width="2"/></svg></button>
<button class="mini" type="button" aria-label="着色"><svg viewBox="0 0 24 24"><path d="M1 7L11 2L22 6V17L11 22L1 18Z" fill="#68b0f4"/><path d="M1 7L11 2L22 6L11 10Z" fill="#c8e4fc"/><path d="M11 10L22 6V17L11 22Z" fill="#3878e0"/><path d="M11 1V11 M8 7H14" stroke="#d04060"/></svg></button>
<i class="sep"></i>
<button class="mini set" type="button" aria-label="捕捉点"><svg viewBox="0 0 24 24"><path d="M1 4L6 8L1 11Z" fill="#109020"/><path d="M1 15L6 19L1 22Z" fill="#c01018"/><path d="M9 8L19 19 M19 8L9 19" stroke="#555"/><circle cx="14" cy="13" r="3" fill="#f0d020"/><g fill="#333"><circle cx="14" cy="6" r="2"/><circle cx="14" cy="21" r="2"/><circle cx="7" cy="13" r="2"/><circle cx="21" cy="13" r="2"/><circle cx="9" cy="8" r="2"/><circle cx="19" cy="19" r="2"/><circle cx="19" cy="8" r="2"/><circle cx="9" cy="19" r="2"/></g></svg></button>
<button class="mini" type="button" aria-label="清除捕捉"><svg viewBox="0 0 24 24"><path d="M5 5L13 13 M13 5L5 13" stroke="#666"/><circle cx="9" cy="9" r="3" fill="#f0d020"/><g fill="#444"><circle cx="9" cy="3" r="2"/><circle cx="3" cy="9" r="2"/><circle cx="5" cy="5" r="2"/><circle cx="13" cy="5" r="2"/><circle cx="15" cy="9" r="2"/><circle cx="5" cy="14" r="2"/><circle cx="10" cy="15" r="2"/></g><path d="M11 17L15 13V15Q18 15 18 12H22Q22 20 15 19V21Z" fill="#309080"/></svg></button>
<button class="mini set" type="button" aria-label="端点"><svg viewBox="0 0 24 24"><path d="M5 20L18 8" stroke="#222" stroke-width="1.5"/><circle cx="19" cy="7" r="2.5" fill="#c01018"/></svg></button>
<button class="mini set" type="button" aria-label="中点"><svg viewBox="0 0 24 24"><path d="M4 21L20 6" stroke="#222" stroke-width="1.5"/><circle cx="12" cy="14" r="2.5" fill="#c01018"/></svg></button>
<button class="mini" type="button" aria-label="控制点"><svg viewBox="0 0 24 24"><path d="M3 2Q11 2 11 10Q11 20 20 20" stroke="#222" stroke-width="1.5"/><circle cx="11" cy="10" r="2.5" fill="#c01018"/></svg></button>
<button class="mini" type="button" aria-label="交点"><svg viewBox="0 0 24 24"><path d="M12 2V21 M2 14Q12 5 22 14" stroke="#222" stroke-width="1.5"/><circle cx="12" cy="9" r="2.5" fill="#c01018"/></svg></button>
<button class="mini set" type="button" aria-label="圆心"><svg viewBox="0 0 24 24"><circle cx="12" cy="12" r="9" stroke="#222" stroke-width="1.5"/><circle cx="12" cy="12" r="2.5" fill="#c01018"/></svg></button>
<button class="mini" type="button" aria-label="象限点"><svg viewBox="0 0 24 24"><circle cx="12" cy="12" r="8" stroke="#333" stroke-width="1.5"/><g fill="#d02838"><circle cx="12" cy="4" r="2.5"/><circle cx="12" cy="20" r="2.5"/><circle cx="4" cy="12" r="2.5"/><circle cx="20" cy="12" r="2.5"/></g></svg></button>
<button class="mini set" type="button" aria-label="现有点"><svg viewBox="0 0 24 24"><path d="M12 4V21 M4 12H21" stroke="#222" stroke-width="1.5"/><circle cx="12" cy="12" r="2.5" fill="#c01018"/></svg></button>
<button class="mini set" type="button" aria-label="曲线上的点"><svg viewBox="0 0 24 24"><path d="M4 20L20 5" stroke="#222" stroke-width="1.5"/><circle cx="7" cy="18" r="2.5" fill="#c01018"/></svg></button>
<button class="mini" type="button" aria-label="面上的点"><svg viewBox="0 0 24 24"><path d="M2 15Q3 4 9 2L22 4Q16 10 17 20L11 22Q9 16 2 15Z" fill="url(#gSky)" stroke="#6088b8"/><circle cx="12" cy="8" r="2.5" fill="#c01018"/></svg></button>
<i class="sep"></i>
<button class="mini" type="button" aria-label="栅格点"><svg viewBox="0 0 24 24"><path d="M5 3L17 7V22L5 17Z M9 4V19 M13 6V21 M5 8L17 12 M5 12L17 17" stroke="#222" stroke-width="1.5"/><circle cx="13" cy="11" r="2" fill="#c01018"/></svg></button>
</div>
<span class="drop end"></span>
</div>

<div class="bar status">
<div class="cell cue"></div><div class="cell message"></div><div class="cell tiny"></div><div class="cell small"></div>
<div class="cell ends">
<svg class="stat" viewBox="0 0 20 20"><path d="M0 0H20V20H0Z" fill="#7f9496"/><path d="M3 6L6 13L9 6L12 13L17 5V14 M3 9L14 7" stroke="#666b70"/></svg>
<svg class="stat" viewBox="0 0 20 20"><path d="M1 5V1H5 M15 1H19V5 M1 15V19H5 M15 19H19V15" stroke="#333" stroke-width="1.5"/><path d="M4 4H16V16H4Z" fill="#fff" stroke="#346"/><path d="M6 7H14V14H6Z" fill="#4888d0"/></svg>
</div>
</div>
</header>

<main class="work">
<nav class="tabs" aria-label="资源条">
<button class="tab" type="button" aria-label="装配导航器"><svg viewBox="0 0 32 40"><path d="M6 4L11 1L16 3V9L21 11V16L16 19L6 15Z" fill="#f4d030" stroke="#a88010"/><path d="M6 4L11 6L16 3 M11 6V16 M6 10L11 12L16 9 M11 12L16 14V19 M16 14L21 11" stroke="#a88010"/><path d="M19 26L24 23L30 24V29L25 33L19 31Z M19 26L25 28V33 M25 28L30 24" fill="#f4d030" stroke="#a88010"/><path d="M21 17H32" stroke="#222" stroke-width="1.5"/><path d="M9 17V32 M9 25H16" stroke="#1818a0" stroke-width="1.5"/></svg></button>
<button class="tab" type="button" aria-label="约束导航器"><svg viewBox="0 0 32 40"><path d="M7 2L17 9L7 16Z M27 2L17 9L27 16Z" fill="#1818c0"/><path d="M17 1V36" stroke="#111" stroke-width="1.5" stroke-dasharray="4 2"/><path d="M3 20H14V32H3Z" fill="#ffff30" stroke="#554"/><path d="M19 20L30 29V32H19Z" fill="#d01018" stroke="#600"/></svg></button>
<button class="tab" type="button" aria-label="部件导航器"><svg viewBox="0 0 32 40"><path d="M3 5V15Q9 19 16 15V5Z" fill="#d070c0" stroke="#903080"/><ellipse cx="9" cy="5" rx="7" ry="3" fill="#f0a8e0" stroke="#903080"/><path d="M18 15H30" stroke="#222" stroke-width="1.5"/><path d="M9 19V34 M9 26H16" stroke="#1818a0" stroke-width="1.5"/><circle cx="23" cy="27" r="6" fill="#fff" stroke="#a03080" stroke-width="1.5"/><circle cx="23" cy="27" r="2" stroke="#a03080" stroke-width="1.5"/></svg></button>
<button class="tab" type="button" aria-label="重用库"><svg viewBox="0 0 32 40"><path d="M2 12L9 5H15L9 12Z M10 12L17 5H23L17 12Z M18 12L25 5H31L26 12Z" fill="#fff" stroke="#777"/><path d="M2 12H9V33H2Z" fill="#f89038" stroke="#c05810"/><path d="M10 12H17V33H10Z" fill="#48d848" stroke="#208820"/><path d="M18 12H25L31 5V25L25 33H18Z" fill="#3898f0" stroke="#1860b0"/><path d="M4 17H7V27H4Z M12 17H15V27H12Z" fill="#fff" fill-opacity=".5"/><path d="M18 17H25 M18 27H25 M25 12V33" stroke="#0850a0"/></svg></button>
<button class="tab spaced" type="button" aria-label="信息"><svg viewBox="0 0 32 40"><path d="M12 2Q30 2 31 21 M12 8Q24 8 25 21 M12 13Q19 13 20 20" stroke="#4878c8" stroke-width="3"/><circle cx="12" cy="22" r="10" fill="#2888e8" stroke="#1858b0"/><path d="M9 20H12V28 M9 28H16" stroke="#fff" stroke-width="2.5"/><circle cx="12" cy="16" r="2" fill="#fff"/></svg></button>
<button class="tab spaced" type="button" aria-label="浏览器"><svg viewBox="0 0 32 40"><path d="M6 6H22L29 13V36H6Z" fill="#f8fbff" stroke="#3868b8" stroke-width="1.5"/><path d="M22 6V13H29" stroke="#3868b8" stroke-width="1.5"/><circle cx="17" cy="24" r="7" fill="#3088c8"/><path d="M11 21Q14 16 17 19L15 26L12 27Z M19 18L24 22L21 29L18 25Z" fill="#40b040"/></svg></button>
<button class="tab active" type="button" aria-label="历史记录"><svg viewBox="0 0 32 40"><circle cx="17" cy="20" r="13" fill="#e0ecf8" stroke="#667" stroke-width="2"/><circle cx="17" cy="20" r="10" stroke="#445" stroke-width="2" stroke-dasharray="1 4"/><path d="M17 11V20H26" stroke="#111" stroke-width="2"/></svg></button>
<button class="tab" type="button" aria-label="系统材料"><svg viewBox="0 0 32 40"><path d="M4 9L12 7V31L4 28Z M12 9H31V29H12" fill="#f8f8f8" stroke="#888" stroke-width="1.5"/><circle cx="17" cy="13" r="3" fill="#3070e0"/><circle cx="17" cy="18" r="3" fill="#30b030"/><circle cx="17" cy="24" r="3" fill="#d02020"/><path d="M22 13H28M22 18H28M22 24H28" stroke="#444"/></svg></button>
<button class="tab" type="button" aria-label="渲染"><svg viewBox="0 0 32 40"><path d="M4 5H15V34H4Z" fill="url(#gRain)"/><path d="M16 16L27 31" stroke="#111" stroke-width="4"/><path d="M14 7L16 11L20 9L18 14L21 17L16 16L13 20L13 14L9 12L13 11Z" fill="#fff"/></svg></button>
<button class="tab" type="button" aria-label="加工向导"><svg viewBox="0 0 32 40"><path d="M6 8L14 7V29H6Z" fill="#2880c0"/><path d="M6 12L14 9M6 17L14 14M6 22L14 19M6 27L14 24" stroke="#a8d8f0"/><path d="M14 12H32 M17 16H30L24 23H15" stroke="#3870c0" stroke-width="1.5"/><path d="M3 30L8 33 M8 29V34 M14 28L17 32" stroke="#c0c020" stroke-width="1.5"/><path d="M16 16L27 31" stroke="#111" stroke-width="4"/><path d="M14 7L16 11L20 9L18 14L21 17L16 16L13 20L13 14L9 12L13 11Z" fill="#fff"/></svg></button>
<button class="tab" type="button" aria-label="角色"><svg viewBox="0 0 32 40"><path d="M14 27Q14 18 23 18T32 27Z" fill="#309030"/><circle cx="23" cy="11" r="6" fill="#e8b870" stroke="#a07020"/><path d="M18 8Q23 2 28 8" stroke="#c09020" stroke-width="3"/><path d="M2 35Q2 26 10 26T18 35Z" fill="#8040c0"/><circle cx="10" cy="20" r="6" fill="#805060"/><circle cx="10" cy="22" r="4" fill="#e8b890"/></svg></button>
<button class="tab" type="button" aria-label="系统可视化"><svg viewBox="0 0 32 40"><path d="M4 9L12 7V31L4 28Z M12 9H31V29H12" fill="#f8f8f8" stroke="#888" stroke-width="1.5"/><path d="M15 12H28V25H15Z" fill="#d03020"/><path d="M19 12H24V18L28 23H15L19 18Z" fill="#80b8f0"/></svg></button>
</nav>
<div class="gutter"></div>
<div class="canvas">
<svg class="model" viewBox="57 158 1861 922" preserveAspectRatio="xMidYMid slice" role="img" aria-label="模架三维模型">
<defs>
<linearGradient id="cone" x1="0" y1=".2" x2="1" y2="0"><stop offset="0" stop-color="#80f4f2"/><stop offset=".3" stop-color="#74dedc"/><stop offset=".7" stop-color="#5cc0bc"/><stop offset="1" stop-color="#60c8c4"/></linearGradient>
<linearGradient id="wall"><stop offset="0" stop-color="#7a4a28"/><stop offset=".5" stop-color="#5a3418"/><stop offset="1" stop-color="#9a5e34"/></linearGradient>
<linearGradient id="bore"><stop offset="0" stop-color="#8a5228"/><stop offset=".45" stop-color="#4a2a10"/><stop offset="1" stop-color="#6a3c1c"/></linearGradient>
<clipPath id="inner"><ellipse cx="984.5" cy="452" rx="61" ry="51"/></clipPath>
<clipPath id="topFace"><path d="M692 225L1286 214L1277 700L686 710Z"/></clipPath>
<clipPath id="front"><path d="M686 711L1284 701L1281 722L687 735Z"/></clipPath>
<clipPath id="below"><path d="M700 735L1257 723V760H700Z"/></clipPath>
<clipPath id="beside"><path d="M1257 723H1267V760H1257Z"/></clipPath>
<clipPath id="open"><path d="M852 889L1154 882V925L852 930Z"/></clipPath>
<g id="bolt"><ellipse rx="20" ry="16.5" fill="#245050"/><ellipse cy="1" rx="18.5" ry="15" fill="#7c7478" stroke="#222" stroke-width="1.5"/><path d="M-11 -3L0 -10L11 -3V6L0 12L-11 6Z" fill="#2a2a2c"/><path d="M-10 7L-4 3V8M-4 3L0 6L4 3L10 7M0 6V11M4 3V8" stroke="#989094" stroke-width="1.5"/></g>
<g id="ringBolt"><ellipse rx="9.5" ry="8" fill="#2a1c38"/><ellipse cx="0" cy="1" rx="7" ry="5.5" fill="#3c2470" stroke="#7038d0" stroke-width="2"/><ellipse cy="1" rx="3" ry="2" stroke="#7038d0"/></g>
<g id="sprueBolt"><ellipse rx="8.5" ry="8" fill="#123c18"/><ellipse cy="0" rx="6" ry="5" stroke="#20d050" stroke-width="2"/><ellipse rx="2.5" ry="2" stroke="#20d050"/></g>
<g id="spring"><ellipse rx="34" ry="25" fill="#4a4a4a"/><ellipse cy="-2" rx="32" ry="22" stroke="#fff" stroke-width="3"/><ellipse cy="-8" rx="31" ry="21" stroke="#fff" stroke-width="3"/><ellipse cy="-14" rx="31" ry="20" stroke="#fff" stroke-width="3"/><ellipse cy="-20" rx="31" ry="20" stroke="#fff" stroke-width="3"/></g>
</defs>
<g stroke="#151a40" stroke-width="1.2" stroke-linejoin="round">
<path d="M712 730L1287 483H1312L1315 486L1308 990L1306 993L713 1005L708 999L710 980Z" fill="#3844b8"/>
<path d="M716 730L1284 484H1309L1302 972L711 981Z" fill="#5a78fa"/>
<path d="M708 982L1305 970V977L708 986Z" fill="#4450d8"/>
<path d="M708 985L1303 973L1308 990L1306 993L713 1005L709 1001Z" fill="#1c2468"/>
<path d="M1270 960L1290 958V943H1296V963L1270 964Z"/>
</g>
<g stroke="#10282c" stroke-linejoin="round">
<path d="M1257 720L1267 720L1262 965L1255 880Z" fill="#0f8ab4"/>
<path d="M1248 720H1257L1255 883L1247 806Z" fill="#2c7886"/>
<path d="M1238 720H1249L1247 804Z" fill="#4c9068"/>
<path d="M839 890H852L851 977H847Z" fill="#1088ac"/>
<path d="M852 886H1154V925L852 930Z" fill="#4ce248"/>
<path d="M852 928L1153 921L1155 926L853 933Z" fill="#38982c"/>
<path d="M853 932L1155 926L1157 943L854 949Z" fill="#184c14"/>
<path d="M854 949L1157 943V946L855 952Z" fill="#6898b8"/>
<path d="M855 951L1157 945L1158 966L856 973Z" fill="#2c4056"/>
<path d="M1153 885H1159L1162 967L1158 966Z" fill="#2a6468"/>
<path d="M743 895L839 893L848 977H752L750 974Z" fill="#054854"/>
<path d="M743 892H787L792 897H744Z" fill="#18dcf4"/>
<path d="M787 891L838 890V893L792 896Z" fill="#24809c"/>
<path d="M1160 887L1255 885L1262 964L1212 969L1163 972Z" fill="#054854"/>
<path d="M1210 883L1255 881V888L1205 890Z" fill="#18dcf4"/>
<path d="M1160 884L1210 882L1205 886L1160 888Z" fill="#2494b4"/>
</g>
<g clip-path="url(#open)"><use href="#spring" x="888" y="888"/><use href="#spring" x="1117" y="884"/><ellipse cx="1001" cy="886" rx="18" ry="9" fill="#8a7a08" stroke="#4a4404"/></g>
<path d="M888 914Q906 913 918 900 M1117 910Q1138 907 1148 894" stroke="#fff" stroke-width="3"/>
<path d="M1120 914V918L1146 916V903" stroke="#1c6a18"/>
<g fill="#e088b0" stroke="#282828"><ellipse cx="869" cy="915" rx="7" ry="4"/><ellipse cx="1136" cy="911" rx="7" ry="4"/></g>
<g stroke="#10282c" stroke-linejoin="round">
<path d="M736 812L1247 803L1255 882L743 892Z" fill="#183c42"/>
<path d="M736 812H787L793 819H737Z" fill="#50bccc"/>
<path d="M789 813L1198 805L1191 809L793 816Z" fill="#307684"/>
<path d="M1198 805L1247 803V810L1191 812Z" fill="#50bccc"/>
<path d="M728 735L1240 724L1247 804L736 812Z" fill="#1f4128"/>
<path d="M729 735H774L778 740H730Z" fill="#70c88c"/>
<path d="M774 735L1197 725L1192 730L778 738Z" fill="#44784e"/>
<path d="M1197 727L1239 725V731L1192 732Z" fill="#70c88c"/>
<path d="M692 224L1286 213L1289 217L1290 230L1282 719L1280 722L687 735L684 731L683 712L690 228Z" fill="#58b8b0"/>
<path d="M686 713L1281 703L1281 721L687 735L684 731Z" fill="#2a5b5c"/>
<path d="M692 225L1286 214L1277 699L686 709Z" fill="#86ffff" stroke="#2c6868"/>
<path d="M1286 215L1280 702" stroke="#286060"/>
</g>
<circle cx="1245" cy="711" r="37" fill="#88ff08" clip-path="url(#topFace)"/>
<circle cx="1245" cy="711" r="37" fill="#2450ac" clip-path="url(#front)"/>
<circle cx="1245" cy="711" r="37" fill="#2638d4" clip-path="url(#below)"/>
<circle cx="1245" cy="711" r="37" fill="#109058" clip-path="url(#beside)"/>
<path d="M1210 701L1278 700L1281 703L1209 705Z" fill="#40a890" stroke="#286060"/>
<path d="M1268 724L1280 722Q1280 729 1276 736L1268 731Z" fill="#6a8a10"/>
<path d="M1240 725H1248V800L1243 748Z" fill="#6080d8" fill-opacity=".5"/>
<g stroke="#123036">
<ellipse cx="983" cy="719" rx="8" ry="5" fill="#80f0ec"/><ellipse cx="987" cy="770" rx="11" ry="7" fill="#68c488"/><ellipse cx="994" cy="850" rx="11" ry="7" fill="#48b0c0"/><ellipse cx="796" cy="937" rx="11" ry="7" fill="#18d0f0"/><ellipse cx="1209" cy="929" rx="11" ry="7" fill="#18d0f0"/><ellipse cx="1003" cy="938" rx="8" ry="5" fill="#50e050"/><ellipse cx="1005" cy="960" rx="8" ry="5" fill="#88c8f8"/><ellipse cx="1007" cy="989" rx="8" ry="5" fill="#5878f8"/>
<path d="M983 714V724 M987 763V777 M994 843V857 M796 930V944 M1209 922V936 M1003 933V943 M1005 955V965 M1007 984V994"/>
</g>
<g class="stamp"><text x="1001" y="723">M12</text><text x="1008" y="773">M16</text><text x="1019" y="853">M16</text><text x="809" y="940">M16</text><text x="1164" y="934">M16</text><text x="1022" y="942">M12</text><text x="1025" y="963">M12</text><text x="1032" y="993">M12</text></g>
<use href="#bolt" x="783" y="333"/><use href="#bolt" x="1193" y="326"/><use href="#bolt" x="781" y="465"/><use href="#bolt" x="1191" y="458"/><use href="#bolt" x="779" y="597"/><use href="#bolt" x="1188" y="590"/>
<g stroke="#2a1a0c" stroke-width="1.5">
<path d="M900 452V463A85 69 0 0 0 1071 461V450Z" fill="url(#wall)"/>
<ellipse cx="985.5" cy="452" rx="85" ry="69" fill="#c48044"/>
<ellipse cx="984.5" cy="452" rx="61" ry="51" fill="url(#bore)"/>
</g>
<g clip-path="url(#inner)">
<ellipse cx="986" cy="466" rx="59" ry="49" fill="url(#cone)" stroke="#1c4444"/>
<path d="M959 490Q959 462 988 462T1017 490V510H959Z" fill="#ffd014" stroke="#5a4408"/>
<ellipse cx="988" cy="487" rx="17" ry="14" fill="#f0a818" stroke="#8a6008"/>
<ellipse cx="988" cy="484" rx="10" ry="7" fill="#ffc840"/><path d="M985 486H991V492H985Z" fill="#4a3008"/>
<use href="#sprueBolt" x="967" y="487"/><use href="#sprueBolt" x="1009" y="487"/>
</g>
<ellipse cx="984.5" cy="452" rx="61" ry="51" stroke="#3a2410" stroke-width="1.5"/>
<use href="#ringBolt" x="912" y="454"/><use href="#ringBolt" x="1057" y="451"/>
<path d="M996 504L999 520L997 545L994 530Z" fill="#b0e8a8"/>
<path d="M992 524L989 534L995 562L997 536Z" fill="#3c50a8"/>
<path d="M1002 565L1048 561L1067 564L1050 567Z" fill="#e89098" stroke="#a06068" stroke-width=".5"/>
<text class="axis yc" x="975" y="502">YC</text><text class="axis zc" x="995" y="522">ZC</text><text class="axis xc" x="1051" y="557">XC</text>
<g stroke-linejoin="round"><path d="M1247 713L1257 715L1280 738Q1282 744 1274 746L1249 722Z" fill="#fff" stroke="#111" stroke-width="1.5"/><path d="M1246 712L1256 714L1249 722Z" fill="#000"/><path d="M1257 726L1272 740 M1279 738L1273 745" stroke="#111"/></g>
<g><path d="M135 981H163L165 1021H135Z M135 998H163 M135 1005H163" fill="#d6d8d9" stroke="#aaaeb0"/><path d="M132 1022V1002" stroke="#1830b0" stroke-width="3"/><path d="M128 1004L131 993L135 1004Z" fill="#1020a0"/><path d="M138 1023H178" stroke="#c01828" stroke-width="3"/><path d="M173 1019L186 1023L173 1027Z" fill="#c01828"/><circle cx="133" cy="1024" r="5" fill="#b8bcbe"/><circle cx="131" cy="1022" r="2" fill="#fff"/>
<text class="triad ty" x="130" y="980">Y</text><text class="triad tz" x="126" y="995">Z</text><text class="triad tx" x="188" y="1028">X</text></g>
<path d="M1866 1073H1918V1080H1866Z" fill="#fff"/><path d="M1866 1073H1918" stroke="#8888a0"/><path d="M1885 1080L1890 1078" stroke="#3080a0" stroke-width="2"/><path d="M1834 1076Q1834 1073 1838 1072L1860 1068Q1864 1068 1865 1072L1867 1080H1835Z" fill="#e85a34"/><path d="M1842 1080Q1844 1077 1852 1076T1862 1077V1080Z" fill="#fff"/>
</svg>
</div>
</main>
</div>
</body>
</html>
```
FILE: styles.css
```css
* { box-sizing: border-box; }
body { margin: 0; background: #d6d6d6; font-family: "Liberation Sans", "Noto Sans CJK SC", sans-serif; }
button { margin: 0; padding: 0; border: 0; background: none; font: inherit; }
svg { display: block; fill: none; }
.defs { position: absolute; width: 0; height: 0; }

.app { min-height: 100vh; display: flex; flex-direction: column; border-left: 2px solid #161616; border-right: 2px solid #55585c; }

/* toolbars */
.strip { height: 5px; background: #dadada; border-bottom: 1px solid #b4b4b4; }
.bar { display: grid; border-top: 1px solid #efefef; border-bottom: 1px solid #b2b2b2; background: linear-gradient(#d9d9d9, #cfcfcf); }
.row-one { height: 45px; grid-template-columns: 489fr 195fr 433fr 408fr 391fr; }
.row-two { height: 45px; grid-template-columns: 692fr 703fr 521fr; border-bottom: 2px solid #9c9c9c; }
.group { display: flex; align-items: stretch; min-width: 0; border-left: 1px solid #f2f2f2; border-right: 1px solid #b4b4b4; }
.grip { width: 9px; flex: none; margin: 7px 0; background: radial-gradient(circle, #fff 1px, #b4b4b4 2px, transparent 2px) 5px 0 / 4px 5px repeat-y; }
.tool { flex: 1 1 0; min-width: 0; display: flex; align-items: center; justify-content: center; }
.tool svg { width: 32px; height: 32px; flex: none; overflow: visible; }
.tool.on svg { background: #c2c2c2; }
.sep { flex: none; width: 2px; margin: 0 3px; border-left: 1px solid #bcbcbc; background: #f2f2f2; }
.drop { flex: none; width: 6px; height: 4px; background: #000; clip-path: polygon(0 0, 100% 0, 50% 100%); }
.tail { flex: none; width: 22px; padding: 0 7px 8px 0; display: flex; flex-direction: column; justify-content: space-between; align-items: flex-end; }
.tail.wide { width: 33px; }
.tail.broad { width: 53px; }
.tail.thin { width: 18px; justify-content: flex-end; }
.tail.slim { width: 17px; justify-content: flex-end; }
.tail.pair { flex-direction: row; }
.tail.pair .low { align-self: flex-end; }
.tail.pair .high { align-self: center; margin: 4px 0 0 5px; }
.drop.inline { align-self: center; margin: 0 1px 0 10px; }
.chev { margin-right: -3px; font: bold 20px/16px "Liberation Sans", sans-serif; color: #000; }
.serif-a { font: bold 34px "Liberation Serif", serif; fill: #111; text-anchor: middle; }
.serif-m { font: 26px "Liberation Serif", serif; fill: #1818c8; text-anchor: middle; }
.zi { font: 29px "Noto Sans CJK SC", sans-serif; font-weight: 300; fill: #4a5ce8; text-anchor: middle; }
.fkey { font: 24px "Noto Sans", sans-serif; fill: #c07028; }

/* selection bar */
.selection { height: 35px; display: flex; align-items: center; padding: 0 0 2px 7px; background: linear-gradient(#cbcbcb, #dadada); }
.pick { position: relative; flex: none; display: block; height: 22px; }
.pick-filter { width: 143px; margin-right: 11px; }
.pick-scope { width: 151px; margin-right: 5px; }
.pick select { display: block; width: 100%; height: 22px; padding: 0 22px 0 1px; appearance: none; border: 2px solid #8c8c8c; border-radius: 5px; background: #fff; color: #000; font: 16px/18px "Noto Sans CJK SC", sans-serif; }
.arrow { position: absolute; top: 2px; right: 1px; width: 21px; height: 19px; border-radius: 0 4px 4px 0; background: linear-gradient(#9cc8ee, #4a88c8); pointer-events: none; }
.arrow::after { content: ""; position: absolute; left: 4px; top: 5px; width: 14px; height: 9px; background: #101828; clip-path: polygon(0 0, 100% 0, 50% 100%); }
.snap { display: flex; align-items: center; height: 100%; }
.snap .sep { align-self: stretch; }
.mini { width: 30px; height: 28px; flex: none; display: flex; align-items: center; justify-content: center; }
.mini svg { width: 24px; height: 24px; }
.mini.set { border: 1px solid #555; border-radius: 3px; background: #fff; }
.drop-close { margin-right: 4px; }
.drop-apart { margin: 0 5px 0 6px; }
.end { margin: 12px 7px 0 auto; }

/* status line */
.status { height: 28px; display: grid; grid-template-columns: 894fr 894fr 26fr 47fr 55fr; background: #d8d8d8; border-bottom-color: #999; }
.cell { border-right: 1px solid #b4b4b4; border-left: 1px solid #f2f2f2; }
.ends { display: flex; align-items: center; gap: 7px; padding-left: 3px; border-right: 0; }
.stat { width: 20px; height: 20px; }

/* work area */
.work { flex: 1; display: flex; }
.tabs { flex: none; width: 43px; margin-top: 1px; padding: 21px 1px 0 8px; display: flex; flex-direction: column; gap: 4px; background: linear-gradient(90deg, #9a9a9a, #acacac); border-top: 2px solid #8a8a8a; }
.tab { height: 51px; display: flex; align-items: center; justify-content: center; border: 1px solid #777; border-radius: 5px 0 0 5px; background: #d6d6d6; }
.tab svg { width: 32px; height: 40px; flex: none; }
.tab.spaced { margin-top: 16px; }
.tab.active { height: 57px; margin: 12px -1px -4px -2px; border-right: 0; background: #ebebeb; }
.gutter { flex: none; width: 12px; background: #ececec; }
.canvas { flex: 1; min-width: 0; display: flex; background: linear-gradient(#b2b3b5, #c5c6c8 30%, #dddfe0 60%, #e6e8ea 80%, #e7e9eb); }
.model { width: 100%; height: auto; }
.stamp text { font: bold 12px "DejaVu Sans", sans-serif; fill: #3a3438; }
.axis { font: 16px "Noto Sans", sans-serif; }
.xc { fill: #8a4850; }
.yc { fill: #50b020; }
.zc { fill: #4438c8; }
.triad { font: 14px "Noto Sans", sans-serif; }
.tx { fill: #c83040; }
.ty { fill: #50b050; }
.tz { fill: #3040d0; }
```
